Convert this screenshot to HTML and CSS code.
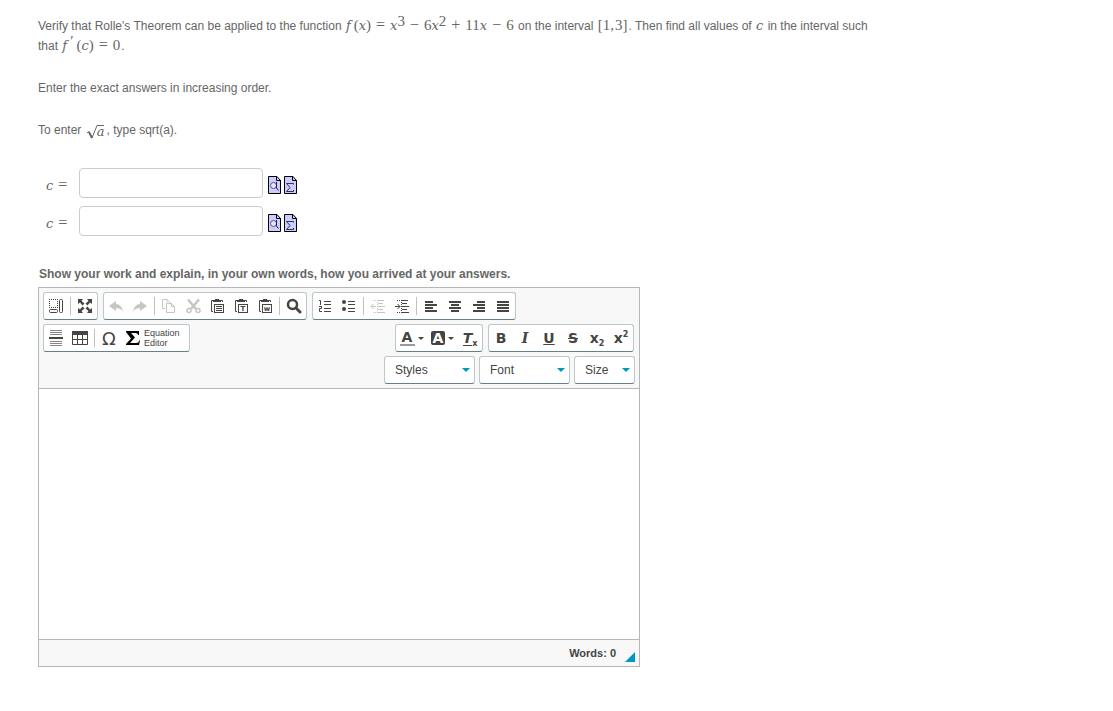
FILE: index.html
```
<!DOCTYPE html>
<html lang="en">
<head>
<meta charset="utf-8">
<title>Rolle's Theorem</title>
<link rel="stylesheet" href="styles.css">
</head>
<body>
<svg class="defs" aria-hidden="true">
  <symbol id="preview" viewBox="0 0 13 18">
    <path d="M.5.5H9L12.500 4.500V17.500H.5Z" fill="#ccf" stroke="#000"/>
    <path d="M8.500 0V4.500H13" fill="none" stroke="#000"/>
    <circle cx="5.500" cy="9.500" r="3" fill="#e4e4ff" stroke="#557"/>
    <path d="M8.500 6V12L10.500 14.500" fill="none" stroke="#224"/>
  </symbol>
  <symbol id="sigma-page" viewBox="0 0 13 18">
    <path d="M.5.5H9L12.500 4.500V17.500H.5Z" fill="#ccf" stroke="#000"/>
    <path d="M8.500 0V4.500H13" fill="none" stroke="#000"/>
    <path d="M9.500 8.500V7.500H2.500L6 11.500L2.500 15.500H9.500V14" fill="none" stroke="#335"/>
  </symbol>
  <symbol id="clip" viewBox="0 0 16 16">
    <path d="M4 2.500H2.500V13.500H4M12 2.500H13.500V4" fill="none" stroke="#444"/>
    <path d="M4 2H6V1H10V2H12V4H4Z" fill="#444"/>
    <rect x="5.500" y="6.500" width="9" height="8" fill="#fff" stroke="#444"/>
  </symbol>
</svg>
<main class="question">
  <p>Verify that Rolle's Theorem can be applied to the function <span class="math"><i>f</i><b class="paren">(</b><i>x</i><b>)</b><b class="op">=</b><i>x</i><sup>3</sup><b class="op">−</b>6<i>x</i><sup>2</sup><b class="op">+</b>11<i>x</i><b class="op">−</b>6</span> on the interval <span class="math"><b>[</b>1,<span class="after-comma">3</span><b>]</b></span>. Then find all values of <span class="math"><i>c</i></span> in the interval such that <span class="math"><i>f</i><sup class="prime">′</sup><b class="paren">(</b><i>c</i><b>)</b><b class="op">=</b>0</span>.</p>
  <p>Enter the exact answers in increasing order.</p>
  <p>To enter <span class="math root"><svg width="10" height="14" viewBox="0 0 10 14"><path d="M0 8L2 6.500L5 13L10 .5" fill="none" stroke="#666"/><path d="M2 7L5 13" stroke="#666" stroke-width="2"/></svg><i class="radicand">a</i></span>, type sqrt(a).</p>

  <div class="answers">
    <div class="answer">
      <label for="c1" class="math"><i>c</i><b class="op">=</b></label>
      <input id="c1" type="text">
      <button class="helper" aria-label="Preview"><svg width="13" height="18"><use href="#preview"/></svg></button>
      <button class="helper" aria-label="Equation editor"><svg width="13" height="18"><use href="#sigma-page"/></svg></button>
    </div>
    <div class="answer">
      <label for="c2" class="math"><i>c</i><b class="op">=</b></label>
      <input id="c2" type="text">
      <button class="helper" aria-label="Preview"><svg width="13" height="18"><use href="#preview"/></svg></button>
      <button class="helper" aria-label="Equation editor"><svg width="13" height="18"><use href="#sigma-page"/></svg></button>
    </div>
  </div>

  <label class="prompt" for="work">Show your work and explain, in your own words, how you arrived at your answers.</label>
  <div class="editor">
    <div class="toolbar">
      <div class="row">
        <div class="group">
          <button aria-label="Show blocks"><svg class="icon" viewBox="0 0 16 16" fill="none" stroke="#444"><path d="M1 1.500H10M1 9.500H10M1.500 1V10M9.500 1V10" stroke-dasharray="1 1"/><rect x="11.500" y="1.500" width="3" height="13" rx="1"/><rect x="1.500" y="11.500" width="8" height="3" rx="1"/></svg></button>
          <span class="sep"></span>
          <button aria-label="Maximize"><svg class="icon" viewBox="0 0 16 16"><path d="M1 1H6L4.500 3L7.500 5.500L5.500 7.500L3 4.500L1 6ZM15 1V6L13 4.500L10.500 7.500L8.500 5.500L11.500 3L10 1ZM1 15V10L3 11.500L5.500 8.500L7.500 10.500L4.500 13L6 15ZM15 15H10L11.500 13L8.500 10.500L10.500 8.500L13 11.500L15 10Z" fill="#444"/></svg></button>
        </div>
        <div class="group">
          <button disabled aria-label="Undo"><svg class="icon" viewBox="0 0 16 16"><path d="M1 8L8 3V6Q13 6 15 13Q12 10 8 10V13Z" fill="#444"/></svg></button>
          <button disabled aria-label="Redo"><svg class="icon" viewBox="0 0 16 16"><path d="M15 8L8 3V6Q3 6 1 13Q4 10 8 10V13Z" fill="#444"/></svg></button>
          <span class="sep"></span>
          <button disabled aria-label="Copy"><svg class="icon" viewBox="0 0 16 16" fill="none" stroke="#444"><path d="M4 10.500H1.500V1.500H6L9.500 5M6 1.500V4.500"/><path d="M5.500 5.500H10.500L13.500 8.500V14.500H5.500ZM10.500 5.500V8.500H13.500"/></svg></button>
          <button disabled aria-label="Cut"><svg class="icon" viewBox="0 0 16 16" fill="none" stroke="#444"><path d="M3 1.500L11 11M14 1.500L6 11" stroke-width="2.500"/><circle cx="4" cy="12.500" r="2" stroke-width="1.500"/><circle cx="13" cy="12.500" r="2" stroke-width="1.500"/></svg></button>
          <button aria-label="Paste"><svg class="icon" viewBox="0 0 16 16"><use href="#clip"/><path d="M7 8.500H13M7 10.500H13M7 12.500H13" stroke="#444"/></svg></button>
          <button aria-label="Paste as plain text"><svg class="icon" viewBox="0 0 16 16"><use href="#clip"/><text class="tiny" x="10" y="13">T</text></svg></button>
          <button aria-label="Paste from Word"><svg class="icon" viewBox="0 0 16 16"><use href="#clip"/><text class="tiny" x="10" y="13">w</text></svg></button>
          <span class="sep"></span>
          <button aria-label="Find"><svg class="icon" viewBox="0 0 16 16"><circle cx="6.500" cy="6.500" r="4.500" fill="none" stroke="#444" stroke-width="2.500"/><path d="M10 10L14 14" stroke="#444" stroke-width="3" stroke-linecap="round"/></svg></button>
        </div>
        <div class="group">
          <button aria-label="Numbered list"><svg class="icon" viewBox="0 0 16 16" fill="none" stroke="#444"><path d="M7 3.500H14M7 6.500H14M7 10.500H14M7 13.500H14"/><path d="M2 2.500H3.500V7M2 8.500H4.500V10.500H2.500V13.500H5"/></svg></button>
          <button aria-label="Bulleted list"><svg class="icon" viewBox="0 0 16 16" fill="#444"><circle cx="3" cy="4" r="2"/><circle cx="3" cy="11" r="2"/><path d="M7 3.500H14M7 6.500H14M7 10.500H14M7 13.500H14" stroke="#444"/></svg></button>
          <span class="sep"></span>
          <button disabled aria-label="Decrease indent"><svg class="icon" viewBox="0 0 16 16" fill="none" stroke="#444"><path d="M1 8.500H6M3.500 6L1 8.500L3.500 11M8 2.500H14M8 5.500H13M8 8.500H15M8 11.500H13M8 14.500H15"/><path d="M7.500 2V15M3 2.500H7M3 14.500H7" stroke-dasharray="1 1"/></svg></button>
          <button aria-label="Increase indent"><svg class="icon" viewBox="0 0 16 16" fill="none" stroke="#444"><path d="M1 8.500H6M3.500 6L6 8.500L3.500 11M8 2.500H14M8 5.500H13M8 8.500H15M8 11.500H13M8 14.500H15"/><path d="M7.500 2V15M3 2.500H7M3 14.500H7" stroke-dasharray="1 1"/></svg></button>
          <span class="sep"></span>
          <button aria-label="Align left"><svg class="icon" viewBox="0 0 16 16" stroke="#444" stroke-width="2"><path d="M2 4H10M2 7H14M2 10H10M2 13H14"/></svg></button>
          <button aria-label="Center"><svg class="icon" viewBox="0 0 16 16" stroke="#444" stroke-width="2"><path d="M2 4H14M4 7H12M2 10H14M4 13H12"/></svg></button>
          <button aria-label="Align right"><svg class="icon" viewBox="0 0 16 16" stroke="#444" stroke-width="2"><path d="M6 4H14M2 7H14M6 10H14M2 13H14"/></svg></button>
          <button aria-label="Justify"><svg class="icon" viewBox="0 0 16 16" stroke="#444" stroke-width="2"><path d="M2 4H14M2 7H14M2 10H14M2 13H14"/></svg></button>
        </div>
      </div>
      <div class="row">
        <div class="group">
          <button aria-label="Horizontal line"><svg class="icon" viewBox="0 0 16 16" fill="none" stroke="#888"><path d="M2 .5H14M2 2.500H14M2 4.500H14M2 11.500H14M2 13.500H14M2 15.500H14"/><path d="M1 8H15" stroke="#444" stroke-width="2"/></svg></button>
          <button aria-label="Table"><svg class="icon" viewBox="0 0 16 16" fill="none" stroke="#444"><path d="M0 1H16V5H0Z" fill="#444" stroke="none"/><path d="M.5 1V14.500H15.500V1M5.500 5V14M10.500 5V14M0 9.500H16"/></svg></button>
          <span class="sep"></span>
          <button class="omega" aria-label="Special character">Ω</button>
          <button class="equation"><svg class="icon" viewBox="0 0 16 16"><path d="M14 5H13Q13 3 10 3H6L10 7.500L5 13H11Q14 13 14 10.500H15L14 15H1V14L6 8.500L1 2V1H14Z" fill="#000"/></svg><span>Equation<br>Editor</span></button>
        </div>
        <div class="spacer"></div>
        <div class="group">
          <button class="color" aria-label="Text color"><span class="letter underbar">A</span><span class="caret"></span></button>
          <button class="color" aria-label="Background color"><span class="letter boxed">A</span><span class="caret"></span></button>
          <button class="letter" aria-label="Remove format"><em class="format">T</em><small>x</small></button>
        </div>
        <div class="group last">
          <button class="letter" aria-label="Bold">B</button>
          <button class="letter serif" aria-label="Italic">I</button>
          <button class="letter" aria-label="Underline"><u>U</u></button>
          <button class="letter" aria-label="Strikethrough"><s>S</s></button>
          <button class="letter" aria-label="Subscript">x<small>2</small></button>
          <button class="letter" aria-label="Superscript">x<small class="raised">2</small></button>
        </div>
      </div>
      <div class="row combos">
        <div class="combo"><select aria-label="Styles"><option>Styles</option></select></div>
        <div class="combo"><select aria-label="Font"><option>Font</option></select></div>
        <div class="combo small"><select aria-label="Size"><option>Size</option></select></div>
      </div>
    </div>
    <textarea id="work"></textarea>
    <div class="status">Words: 0<svg width="10" height="10" viewBox="0 0 10 10"><path d="M10 0V10H0Z" fill="#0098c3"/></svg></div>
  </div>
</main>
</body>
</html>
```
FILE: styles.css
```
* { box-sizing: border-box; }
body {
  margin: 0;
  font: 12px/20px "Liberation Sans", Arial, sans-serif;
  color: #666;
  background: #fff;
}
.defs { display: none; }
.question { max-width: 878px; padding: 16px 0 32px 38px; }
p { margin: 0 0 22px; }
button { border: 0; padding: 0; background: none; color: #444; font: inherit; }
svg { display: block; }

.math { display: inline-block; margin: 0 1px; font: 15px/16px "Liberation Serif", serif; white-space: nowrap; }
.math i { font-family: "DejaVu Serif", serif; font-size: 13px; line-height: 16px; }
.math b { font-weight: normal; font-size: 15px; line-height: 16px; }
.math .op { margin: 0 5px; font-size: 16px; }
.math .paren { margin-left: 3px; }
.math sup { font-size: 15px; line-height: 0; vertical-align: 4px; }
.math .prime { margin-left: 3px; }
.after-comma { margin-left: 1px; }
.math.root { display: inline-flex; margin: 0 2px; vertical-align: -5px; }
.root .radicand { height: 14px; border-top: 1px solid #666; line-height: 12px; }

.answers { display: grid; gap: 8px; margin: 28px 0; }
.answer { display: flex; align-items: center; }
.answer label { width: 41px; margin: 0; padding: 4px 0 0 8px; }
.answer input {
  width: 184px;
  height: 30px;
  margin-right: 5px;
  padding: 4px 8px;
  border: 1px solid #ccc;
  border-radius: 4px;
  font: inherit;
}
.helper { margin: 4px 3px 0 0; }

.prompt { display: block; margin: 0 0 3px 1px; font-weight: bold; }
.editor { max-width: 602px; border: 1px solid #b6b6b6; background: #f8f8f8; color: #444; }
.toolbar { display: grid; gap: 4px; padding: 4px; border-bottom: 1px solid #b6b6b6; }
.row { display: flex; gap: 5px; }
.spacer { flex: 1; }
.group {
  display: flex;
  align-items: center;
  height: 28px;
  border: 1px solid #bcc8ca;
  border-bottom-color: #648187;
  border-radius: 3px;
  background: #fff;
}
.last { margin-right: 1px; }
.group button { display: flex; align-items: center; justify-content: center; width: 24px; height: 26px; }
.group button:disabled { opacity: 0.3; }
.icon { width: 16px; height: 16px; }
.tiny { font: bold 7px "DejaVu Sans", sans-serif; fill: #444; text-anchor: middle; }
.sep { width: 1px; height: 18px; margin: 0 2px; background: #c0c0c0; }
.group .omega { font: 18px "DejaVu Sans", sans-serif; }
.group .equation { width: 68px; gap: 3px; justify-content: flex-start; padding-left: 4px; text-align: left; font-size: 9px; line-height: 10px; }
.group .color { width: 31px; gap: 3px; }
.letter { font: bold 14px/14px "DejaVu Sans", sans-serif; }
.underbar { width: 15px; border-bottom: 2px solid #999; }
.boxed { width: 14px; border-radius: 2px; background: #444; color: #fff; }
.caret { border: 3px solid transparent; border-top-color: #444; border-bottom: 0; }
.letter small { align-self: flex-end; padding-bottom: 3px; font-size: 8px; line-height: 8px; }
.letter .raised { align-self: flex-start; padding: 6px 0 0; }
.format { border-bottom: 1px solid #444; }
.group .serif { font-family: "DejaVu Serif", serif; font-style: italic; }

.combos { gap: 4px; justify-content: flex-end; }
.combo { position: relative; width: 91px; }
.combo.small { width: 61px; }
.combo select {
  display: block;
  width: 100%;
  height: 28px;
  padding: 0 10px;
  appearance: none;
  border: 1px solid #bcc8ca;
  border-bottom-color: #648187;
  border-radius: 3px;
  background: #fff;
  color: #444;
  font: inherit;
}
.combo::after {
  content: "";
  position: absolute;
  top: 12px;
  right: 5px;
  border: 4px solid transparent;
  border-top-color: #0098c3;
  border-bottom: 0;
  pointer-events: none;
}
textarea { display: block; width: 100%; height: 250px; padding: 12px; border: 0; outline: 0; resize: none; background: #fff; font: inherit; }
.status {
  display: flex;
  align-items: center;
  justify-content: flex-end;
  gap: 9px;
  height: 27px;
  padding-right: 4px;
  border-top: 1px solid #b6b6b6;
  font-size: 11px;
  font-weight: bold;
}
.status svg { margin-top: 8px; }
```
